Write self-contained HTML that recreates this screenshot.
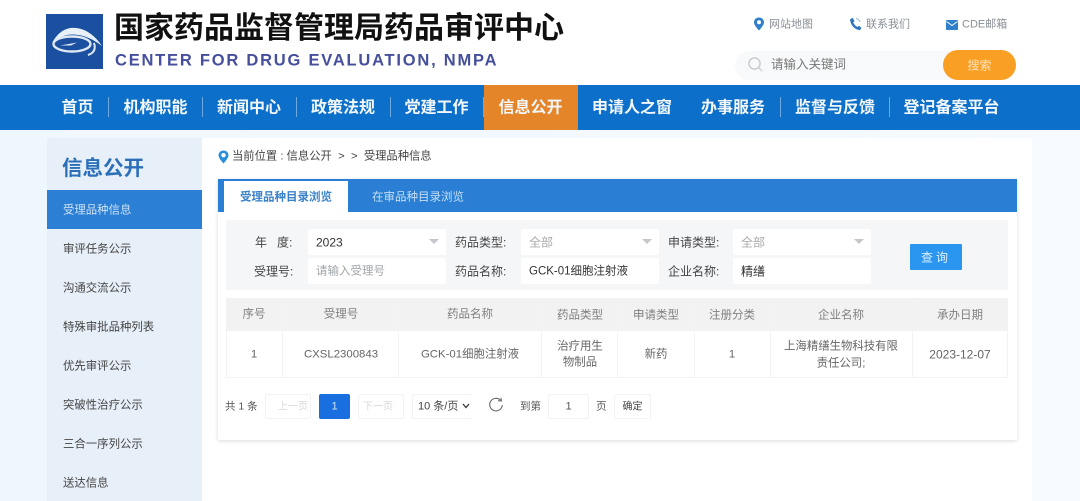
<!DOCTYPE html>
<html lang="zh"><head><meta charset="utf-8"><title>受理品种信息</title>
<style>
*{box-sizing:border-box;margin:0;padding:0}
html,body{width:1080px;height:501px;overflow:hidden;background:#f1f7fe}
body{position:relative;font-family:"Liberation Sans","Noto Sans CJK SC",sans-serif;color:#444;filter:blur(.35px)}
.a{position:absolute}
.t{position:absolute;white-space:nowrap;line-height:20px;height:20px;transform:translateY(-9.5px)}
.c{text-align:center;transform:translate(-50%,-9.5px)}
.nav{color:#f2f7fc;font-size:16px;font-weight:700}
.sep{position:absolute;top:97px;width:1px;height:20px;background:#6fa9df}
.side{font-size:11.4px;color:#444;left:63px}
.lab{font-size:12px;color:#444}
.box{position:absolute;background:#fff;height:26px;border-radius:2px}
.arrow{position:absolute;width:0;height:0;border-left:5px solid transparent;border-right:5px solid transparent;border-top:5px solid #c4c8cc}
.th{font-size:11.5px;color:#808080}
.td{font-size:11.4px;color:#666}
.vl{position:absolute;width:1px;background:#f3f3f3}
.pg{position:absolute;top:394px;height:25px;background:#fff;border:1px solid #f1f2f4;border-radius:2px}
</style></head><body>
<div class="a" style="left:0;top:0;width:1080px;height:85px;background:#fff"></div>
<div class="a" style="left:0;top:130px;width:1080px;height:371px;background:linear-gradient(90deg,#eff7fe,#f6faff)"></div>
<div class="a" style="left:202px;top:138px;width:830px;height:363px;background:#fff"></div>
<div class="a" style="left:47px;top:138px;width:155px;height:363px;background:#e7eff8"></div>

<svg class="a" style="left:46px;top:14px" width="57" height="55" viewBox="0 0 57 55">
<rect width="57" height="55" fill="#1a509f"/>
<path d="M6 29C13 16 22 13 30 14C41 15 50 23 56 32C47 25 38 21 28 20.5C19 20 11 24 6 29Z" fill="#e8f0f8"/>
<ellipse cx="26" cy="30" rx="18.5" ry="7.5" fill="none" stroke="#dfe9f5" stroke-width="2.4"/>
<path d="M14 31.5L31 28.5L25 31.5Z" fill="#dfe9f5"/>
<path d="M42 41C48 39 50 35 48 29" fill="none" stroke="#dfe9f5" stroke-width="2"/>
</svg>
<div class="t" style="left:114px;top:29px;font-size:30px;line-height:34px;height:34px;transform:translateY(-17px);font-weight:700;color:#111">国家药品监督管理局药品审评中心</div>
<div class="t" style="left:115px;top:60px;font-size:16.5px;font-weight:700;color:#454f9d;letter-spacing:1.78px">CENTER FOR DRUG EVALUATION, NMPA</div>

<svg class="a" style="left:753px;top:17px" width="12" height="14" viewBox="0 0 12 14"><path d="M6 0.5C3 .5 1 2.7 1 5.3C1 8.5 6 13.5 6 13.5S11 8.5 11 5.3C11 2.7 9 .5 6 .5Z" fill="#2f7fca"/><circle cx="6" cy="5.2" r="2" fill="#fff"/></svg>
<div class="t" style="left:769px;top:24px;font-size:11px;color:#8a8f96">网站地图</div>
<svg class="a" style="left:849px;top:17px" width="13" height="14" viewBox="0 0 13 14"><path d="M1 2.5L3.5 .8L5.5 4L4.2 5.5C5 7.5 6.5 9 8.5 10L10 8.8L12.5 11L10.8 13.2C5.5 12.5 1.5 8 1 2.5Z" fill="#2f74bc"/><path d="M7 1.5A5 5 0 0 1 11 5" stroke="#8fb8e0" fill="none"/></svg>
<div class="t" style="left:866px;top:24px;font-size:11px;color:#8a8f96">联系我们</div>
<svg class="a" style="left:946px;top:20px" width="12" height="10" viewBox="0 0 12 10"><rect width="12" height="10" rx="1" fill="#2f7fca"/><path d="M.5 1.5L6 5.5L11.5 1.5" stroke="#fff" fill="none"/></svg>
<div class="t" style="left:962px;top:24px;font-size:11px;color:#8a8f96">CDE邮箱</div>

<div class="a" style="left:735px;top:51px;width:281px;height:29px;border-radius:15px;background:#f8f9fa"></div>
<svg class="a" style="left:747px;top:56px" width="17" height="17" viewBox="0 0 17 17"><circle cx="7.5" cy="7.5" r="5.6" fill="none" stroke="#c3c6c9" stroke-width="1.3"/><path d="M11.5 11.5L15 15" stroke="#d0d2d5" stroke-width="1.5"/></svg>
<div class="t" style="left:771px;top:64px;font-size:12.5px;color:#777">请输入关键词</div>
<div class="a" style="left:943px;top:50px;width:73px;height:30px;border-radius:15px;background:#f9a024"></div>
<div class="t c" style="left:979.5px;top:65px;font-size:12px;color:#fde3bd">搜索</div>

<div class="a" style="left:0;top:85px;width:1080px;height:45px;background:#0c6fc9"></div>
<div class="a" style="left:484px;top:85px;width:94px;height:45px;background:#e58529"></div>
<div class="t c nav" style="left:77.5px;top:108px">首页</div>
<div class="sep" style="left:108px"></div>
<div class="t c nav" style="left:155.5px;top:108px">机构职能</div>
<div class="sep" style="left:202px"></div>
<div class="t c nav" style="left:249px;top:108px">新闻中心</div>
<div class="sep" style="left:296px"></div>
<div class="t c nav" style="left:343px;top:108px">政策法规</div>
<div class="sep" style="left:390px"></div>
<div class="t c nav" style="left:436.5px;top:108px">党建工作</div>
<div class="sep" style="left:483px"></div>
<div class="t c nav" style="left:530.5px;top:108px">信息公开</div>
<div class="t c nav" style="left:632px;top:108px">申请人之窗</div>
<div class="t c nav" style="left:733px;top:108px">办事服务</div>
<div class="sep" style="left:780px"></div>
<div class="t c nav" style="left:835px;top:108px">监督与反馈</div>
<div class="sep" style="left:889px"></div>
<div class="t c nav" style="left:951.5px;top:108px">登记备案平台</div>

<div class="t" style="left:62px;top:169px;font-size:20.5px;height:28px;line-height:28px;transform:translateY(-14px);font-weight:700;color:#2a6fb8">信息公开</div>
<div class="a" style="left:47px;top:190px;width:155px;height:39px;background:#2b7fd4"></div>
<div class="t side" style="top:210px;color:#cfe3f6">受理品种信息</div>
<div class="t side" style="top:249px">审评任务公示</div>
<div class="t side" style="top:288px">沟通交流公示</div>
<div class="t side" style="top:327px">特殊审批品种列表</div>
<div class="t side" style="top:366px">优先审评公示</div>
<div class="t side" style="top:405px">突破性治疗公示</div>
<div class="t side" style="top:444px">三合一序列公示</div>
<div class="t side" style="top:483px">送达信息</div>

<svg class="a" style="left:218px;top:150px" width="11" height="14" viewBox="0 0 11 14"><path d="M5.5 .5C2.7 .5 .5 2.6 .5 5.3C.5 8.5 5.5 13.5 5.5 13.5S10.5 8.5 10.5 5.3C10.5 2.6 8.3 .5 5.5 .5Z" fill="#2a8fd8"/><circle cx="5.5" cy="5.2" r="2.2" fill="#fff"/></svg>
<div class="t" style="left:232px;top:156px;font-size:11.3px;color:#444">当前位置 : 信息公开 &nbsp;&gt; &nbsp;&gt; &nbsp;受理品种信息</div>

<div class="a" style="left:218px;top:179px;width:799px;height:261px;background:#fff;box-shadow:0 1px 4px rgba(0,0,0,.15)"></div>
<div class="a" style="left:218px;top:179px;width:799px;height:33px;background:#2a7fd4"></div>
<div class="a" style="left:224px;top:181px;width:124px;height:31px;background:#fff"></div>
<div class="t c" style="left:286px;top:197px;font-size:11.5px;font-weight:700;color:#3a82c8">受理品种目录浏览</div>
<div class="t c" style="left:418px;top:197px;font-size:11.5px;color:#c6dff6">在审品种目录浏览</div>

<div class="a" style="left:226px;top:220px;width:782px;height:70px;background:#f5f6f8"></div>
<div class="t lab" style="left:255px;top:242px">年</div>
<div class="t lab" style="left:277px;top:242px">度:</div>
<div class="t lab" style="left:254px;top:271px">受理号:</div>
<div class="t lab" style="left:455px;top:242px">药品类型:</div>
<div class="t lab" style="left:455px;top:271px">药品名称:</div>
<div class="t lab" style="left:668px;top:242px">申请类型:</div>
<div class="t lab" style="left:668px;top:271px">企业名称:</div>

<div class="box" style="left:308px;top:229px;width:138px"></div>
<div class="t" style="left:316px;top:242px;font-size:12px;color:#333">2023</div>
<div class="arrow" style="left:429px;top:239px"></div>
<div class="box" style="left:308px;top:258px;width:138px"></div>
<div class="t" style="left:316px;top:271px;font-size:11.5px;color:#a0a4a8">请输入受理号</div>
<div class="box" style="left:521px;top:229px;width:138px"></div>
<div class="t" style="left:529px;top:242px;font-size:12px;color:#aaa">全部</div>
<div class="arrow" style="left:642px;top:239px"></div>
<div class="box" style="left:521px;top:258px;width:138px"></div>
<div class="t" style="left:529px;top:271px;font-size:11.5px;color:#333">GCK-01细胞注射液</div>
<div class="box" style="left:733px;top:229px;width:138px"></div>
<div class="t" style="left:741px;top:242px;font-size:12px;color:#aaa">全部</div>
<div class="arrow" style="left:854px;top:239px"></div>
<div class="box" style="left:733px;top:258px;width:138px"></div>
<div class="t" style="left:741px;top:271px;font-size:12px;color:#333">精缮</div>
<div class="a" style="left:910px;top:244px;width:52px;height:26px;background:#2b96f0;border-radius:1px"></div>
<div class="t c" style="left:936px;top:257px;font-size:12px;color:#dcefff;letter-spacing:3px">查询</div>

<div class="a" style="left:226px;top:298px;width:782px;height:33px;background:#f2f2f2"></div>
<div class="a" style="left:226px;top:331px;width:782px;height:47px;border:1px solid #f3f3f3;border-top:0"></div>
<div class="vl" style="left:282px;top:298px;height:80px"></div>
<div class="vl" style="left:398px;top:298px;height:80px"></div>
<div class="vl" style="left:541px;top:298px;height:80px"></div>
<div class="vl" style="left:617px;top:298px;height:80px"></div>
<div class="vl" style="left:694px;top:298px;height:80px"></div>
<div class="vl" style="left:770px;top:298px;height:80px"></div>
<div class="vl" style="left:912px;top:298px;height:80px"></div>
<div class="t c th" style="left:254px;top:314px">序号</div>
<div class="t c th" style="left:341px;top:314px">受理号</div>
<div class="t c th" style="left:470px;top:314px">药品名称</div>
<div class="t c th" style="left:580px;top:315px">药品类型</div>
<div class="t c th" style="left:656px;top:315px">申请类型</div>
<div class="t c th" style="left:732px;top:315px">注册分类</div>
<div class="t c th" style="left:841px;top:315px">企业名称</div>
<div class="t c th" style="left:960px;top:315px">承办日期</div>
<div class="t c td" style="left:254px;top:354px">1</div>
<div class="t c td" style="left:341px;top:354px">CXSL2300843</div>
<div class="t c td" style="left:470px;top:354px">GCK-01细胞注射液</div>
<div class="t c td" style="left:580px;top:346px">治疗用生</div>
<div class="t c td" style="left:580px;top:362px">物制品</div>
<div class="t c td" style="left:656px;top:354px">新药</div>
<div class="t c td" style="left:732px;top:354px">1</div>
<div class="t c td" style="left:841px;top:346px">上海精缮生物科技有限</div>
<div class="t c td" style="left:841px;top:363px">责任公司;</div>
<div class="t c td" style="left:960px;top:354px;font-size:12px">2023-12-07</div>

<div class="t" style="left:225px;top:406px;font-size:10.5px;color:#555">共 1 条</div>
<div class="pg" style="left:265px;width:46px"></div>
<div class="t c" style="left:293px;top:407px;font-size:10px;color:#d8d8d8">上一页</div>
<div class="a" style="left:319px;top:394px;width:31px;height:25px;background:#1a6fe0;border-radius:2px"></div>
<div class="t c" style="left:334.5px;top:406px;font-size:11px;color:#cfe2fa">1</div>
<div class="pg" style="left:358px;width:46px"></div>
<div class="t c" style="left:378px;top:407px;font-size:10px;color:#d8d8d8">下一页</div>
<div class="pg" style="left:412px;width:60px;border-right:0"></div>
<div class="t" style="left:418px;top:406px;font-size:11px;color:#444">10 条/页</div>
<svg class="a" style="left:462px;top:403px" width="8" height="6" viewBox="0 0 8 6"><path d="M1 1L4 4.5L7 1" fill="none" stroke="#333" stroke-width="1.3"/></svg>
<svg class="a" style="left:488px;top:397px" width="16" height="16" viewBox="0 0 16 16"><path d="M12.5 3.2A6.3 6.3 0 1 0 14.3 8" fill="none" stroke="#666" stroke-width="1.1"/><path d="M10 3.6L13.4 4L13 .8" fill="none" stroke="#666" stroke-width="1"/></svg>
<div class="t" style="left:520px;top:406px;font-size:10.5px;color:#555">到第</div>
<div class="pg" style="left:548px;width:41px"></div>
<div class="t c" style="left:568.5px;top:406px;font-size:11px;color:#555">1</div>
<div class="t" style="left:596px;top:406px;font-size:10.5px;color:#555">页</div>
<div class="pg" style="left:614px;width:37px"></div>
<div class="t c" style="left:632.5px;top:407px;font-size:10px;color:#444">确定</div>
</body></html>
